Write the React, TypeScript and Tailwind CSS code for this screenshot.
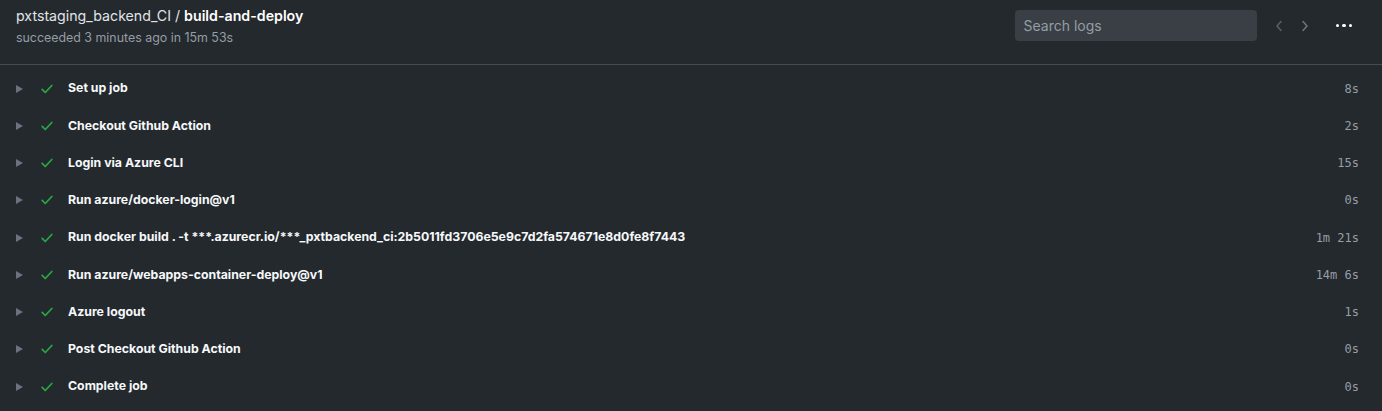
import React from 'react';

const steps = [
  { name: 'Set up job', time: '8s' },
  { name: 'Checkout Github Action', time: '2s' },
  { name: 'Login via Azure CLI', time: '15s' },
  { name: 'Run azure/docker-login@v1', time: '0s' },
  {
    name: 'Run docker build . -t ***.azurecr.io/***_pxtbackend_ci:2b5011fd3706e5e9c7d2fa574671e8d0fe8f7443',
    time: '1m 21s',
  },
  { name: 'Run azure/webapps-container-deploy@v1', time: '14m 6s' },
  { name: 'Azure logout', time: '1s' },
  { name: 'Post Checkout Github Action', time: '0s' },
  { name: 'Complete job', time: '0s' },
];

function Check() {
  return (
    <svg width="14" height="14" viewBox="0 0 16 16" fill="none">
      <path d="M2.5 8.5l3.5 3.5 7.5-8" stroke="#28a745" strokeWidth="2" strokeLinecap="round" strokeLinejoin="round" />
    </svg>
  );
}

function Chevron({ dir, color }: { dir: 'left' | 'right'; color: string }) {
  return (
    <svg width="10" height="14" viewBox="0 0 10 14" fill="none">
      <path
        d={dir === 'left' ? 'M7 2.5L3 7l4 4.5' : 'M3 2.5L7 7l-4 4.5'}
        stroke={color}
        strokeWidth="1.6"
        strokeLinecap="round"
        strokeLinejoin="round"
      />
    </svg>
  );
}

export default function App() {
  return (
    <div
      className="w-[1382px] h-[411px] bg-[#24292e] overflow-hidden"
      style={{ fontFamily: 'Inter, "Liberation Sans", sans-serif' }}
    >
      <div className="flex items-start justify-between h-[65px] border-b border-[#444d56] pl-4 pr-[30px]">
        <div className="pt-[6px]">
          <div className="text-[14.2px] leading-[20px] text-[#e1e4e8]">
            pxtstaging_backend_CI / <span className="font-semibold text-white">build-and-deploy</span>
          </div>
          <div className="text-[12.4px] leading-[18px] mt-[3px] text-[#959da5]">
            succeeded 3 minutes ago in 15m 53s
          </div>
        </div>
        <div className="flex items-center pt-[10px]">
          <div className="w-[242px] h-[31px] rounded-[4px] bg-[#3a3f45] flex items-center px-[9px] text-[14px] text-[#959da5]">
            Search logs
          </div>
          <div className="flex items-center gap-4 ml-[17px]">
            <Chevron dir="left" color="#586069" />
            <Chevron dir="right" color="#6a737d" />
          </div>
          <div className="ml-[26px] flex gap-[3px]">
            <span className="w-[3.5px] h-[3.5px] rounded-full bg-white" />
            <span className="w-[3.5px] h-[3.5px] rounded-full bg-white" />
            <span className="w-[3.5px] h-[3.5px] rounded-full bg-white" />
          </div>
        </div>
      </div>
      <div className="pt-[5px]">
        {steps.map((s) => (
          <div key={s.name} className="flex items-center h-[37.25px] pl-4 pr-[23px]">
            <svg width="8" height="8" viewBox="0 0 8 8" className="mr-[16px]">
              <path d="M0 0l7 4-7 4z" fill="#6a737d" />
            </svg>
            <Check />
            <span className="ml-[14px] text-[12.3px] font-bold text-[#f6f8fa] flex-1">{s.name}</span>
            <span
              className="text-[12px] text-[#959da5]"
              style={{ fontFamily: '"DejaVu Sans Mono", "Liberation Mono", monospace' }}
            >
              {s.time}
            </span>
          </div>
        ))}
      </div>
    </div>
  );
}
